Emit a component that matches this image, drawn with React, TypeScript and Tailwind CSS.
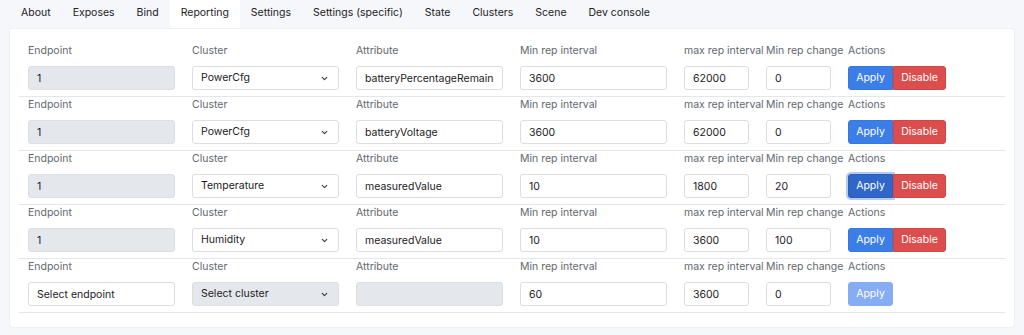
import { ChevronDown } from "lucide-react";

type ReportRow = {
  endpoint: string;
  cluster: string;
  attribute: string;
  minInterval: string;
  maxInterval: string;
  minChange: string;
  focused?: boolean;
  isNew?: boolean;
};

const tabs = [
  "About",
  "Exposes",
  "Bind",
  "Reporting",
  "Settings",
  "Settings (specific)",
  "State",
  "Clusters",
  "Scene",
  "Dev console",
];

const rows: ReportRow[] = [
  { endpoint: "1", cluster: "PowerCfg", attribute: "batteryPercentageRemaining", minInterval: "3600", maxInterval: "62000", minChange: "0" },
  { endpoint: "1", cluster: "PowerCfg", attribute: "batteryVoltage", minInterval: "3600", maxInterval: "62000", minChange: "0" },
  { endpoint: "1", cluster: "Temperature", attribute: "measuredValue", minInterval: "10", maxInterval: "1800", minChange: "20", focused: true },
  { endpoint: "1", cluster: "Humidity", attribute: "measuredValue", minInterval: "10", maxInterval: "3600", minChange: "100" },
  { endpoint: "", cluster: "Select cluster", attribute: "", minInterval: "60", maxInterval: "3600", minChange: "0", isNew: true },
];

const inputBase =
  "block h-6 w-full rounded-[3px] border border-[#dadee3] px-[8px] text-[10.5px] text-[#1d2125] outline-none";

function Field({ label, children }: { label: string; children: React.ReactNode }) {
  return (
    <div className="flex flex-col pl-[9px] pr-[8px]">
      <span className="block h-4 whitespace-nowrap text-[10.5px] leading-4 text-[#62686f]">{label}</span>
      <div className="mt-[7px] h-6">{children}</div>
    </div>
  );
}

function ReportingRow({ row }: { row: ReportRow }) {
  return (
    <div className="grid h-[54px] grid-cols-[164px_164px_164px_164px_82px_82px_1fr] border-b border-[#e3e7ec]">
      <Field label="Endpoint">
        {row.isNew ? (
          <input readOnly placeholder="Select endpoint" className={`${inputBase} bg-white placeholder:text-[#1d2125]`} />
        ) : (
          <input readOnly value={row.endpoint} className={`${inputBase} bg-[#e4e7eb]`} />
        )}
      </Field>
      <Field label="Cluster">
        <div
          className={`relative flex h-6 items-center rounded-[3px] border border-[#dadee3] px-[8px] text-[10.5px] text-[#1d2125] ${
            row.isNew ? "bg-[#e4e7eb]" : "bg-white"
          }`}
        >
          {row.cluster}
          <ChevronDown className="absolute right-[9px] top-[7px] h-[9px] w-[9px] text-[#343a40]" strokeWidth={3} />
        </div>
      </Field>
      <Field label="Attribute">
        <input
          readOnly
          value={row.attribute}
          className={`${inputBase} ${row.isNew ? "bg-[#e4e7eb]" : "bg-white"}`}
        />
      </Field>
      <Field label="Min rep interval">
        <input readOnly value={row.minInterval} className={`${inputBase} bg-white`} />
      </Field>
      <Field label="max rep interval">
        <input readOnly value={row.maxInterval} className={`${inputBase} bg-white`} />
      </Field>
      <Field label="Min rep change">
        <input readOnly value={row.minChange} className={`${inputBase} bg-white`} />
      </Field>
      <Field label="Actions">
        <div className="flex h-6">
          {row.isNew ? (
            <button type="button" className="h-6 w-[45px] rounded-[3px] border border-[#86acf3] bg-[#86acf3] text-[10.5px] text-white">
              Apply
            </button>
          ) : (
            <>
              <button
                type="button"
                className={`h-6 w-[45px] rounded-l-[3px] border text-[10.5px] text-white ${
                  row.focused
                    ? "border-[#2a5fbd] bg-[#2f67c8] shadow-[0_0_0_2px_rgba(120,160,230,0.55)]"
                    : "border-[#3678e0] bg-[#3b7ee8]"
                }`}
              >
                Apply
              </button>
              <button
                type="button"
                className="h-6 w-[53px] rounded-r-[3px] border border-[#d44545] bg-[#dc4d4d] text-[10.5px] text-white"
              >
                Disable
              </button>
            </>
          )}
        </div>
      </Field>
    </div>
  );
}

export default function App() {
  return (
    <div className="h-[335px] w-[1024px] bg-[#f5f7fb] font-['Inter',sans-serif]">
      <nav className="flex h-7 pl-[10px]">
        {tabs.map((tab) => (
          <div
            key={tab}
            className={`flex h-7 items-center px-[11px] pb-[3px] text-[10.5px] text-[#1d2125] ${
              tab === "Reporting" ? "bg-white" : ""
            }`}
          >
            {tab}
          </div>
        ))}
      </nav>
      <section className="mx-[9px] rounded-b-[4px] rounded-tr-[4px] border border-[#edf0f4] bg-white px-[9px] pt-[14px] pb-[14px]">
        {rows.map((row, i) => (
          <ReportingRow key={i} row={row} />
        ))}
      </section>
    </div>
  );
}
